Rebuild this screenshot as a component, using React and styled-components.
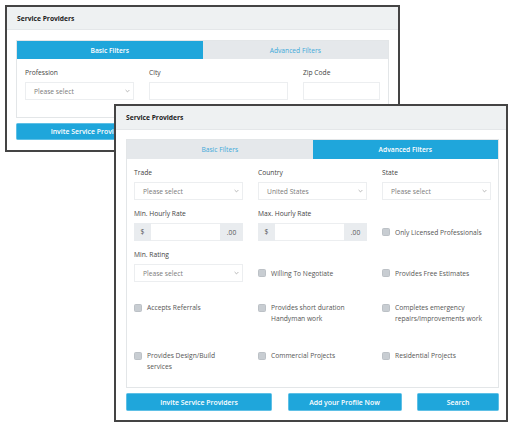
import React from "react";
import styled, { createGlobalStyle } from "styled-components";

const Global = createGlobalStyle`
  html, body { margin: 0; padding: 0; background: #fff; }
  body { font-family: "Open Sans", "Liberation Sans", sans-serif; font-size: 6.7px; color: #444; }
  * { box-sizing: border-box; }
`;

const Desk = styled.div`
  position: relative;
  width: 512px;
  height: 423px;
  overflow: hidden;
  background: #fff;
`;

const Win = styled.div`
  position: absolute;
  left: ${(p) => p.$x}px;
  top: ${(p) => p.$y}px;
  width: ${(p) => p.$w}px;
  height: ${(p) => p.$h}px;
  border: 2px solid #444;
  background: #fff;
  display: flex;
  flex-direction: column;
`;

const Header = styled.div`
  height: ${(p) => p.$h}px;
  flex: none;
  background: #eef1f2;
  border-bottom: 1px solid #e4e7e9;
  display: flex;
  align-items: center;
  padding-left: 10px;
  font-weight: 700;
  font-size: 6.7px;
  color: #222;
`;

const Body = styled.div`
  padding: ${(p) => p.$pad};
  display: flex;
  flex-direction: column;
`;

const Panel = styled.div`
  border: 1px solid #e3e6e8;
  display: flex;
  flex-direction: column;
`;

const Tabs = styled.div`
  display: flex;
  height: ${(p) => p.$h}px;
`;

const Tab = styled.div`
  flex: 1;
  display: flex;
  align-items: center;
  justify-content: center;
  background: ${(p) => (p.$active ? "#1fa6db" : "#e5e8eb")};
  color: ${(p) => (p.$active ? "#fff" : "#3ea9da")};
  font-weight: ${(p) => (p.$active ? 600 : 400)};
`;

const PanelBody = styled.div`
  padding: ${(p) => p.$pad};
  display: flex;
  flex-direction: column;
`;

const Row = styled.div`
  display: grid;
  grid-template-columns: ${(p) => p.$cols || "repeat(3, 1fr)"};
  column-gap: 15px;
  margin-top: ${(p) => p.$mt || 0}px;
`;

const Field = styled.div`
  display: flex;
  flex-direction: column;
`;

const Label = styled.div`
  line-height: 10px;
  height: 10px;
  margin-bottom: 4px;
  color: #444;
`;

const SelectBox = styled.div`
  height: 18px;
  border: 1px solid #eceef0;
  display: flex;
  align-items: center;
  justify-content: space-between;
  padding: 0 3px 0 8px;
  color: #7a7a7a;
  background: #fff;
`;

const TextBox = styled.div`
  height: 18px;
  border: 1px solid #eceef0;
  background: #fff;
`;

const Group = styled.div`
  height: 18px;
  display: flex;
`;

const Addon = styled.div`
  width: ${(p) => p.$w}px;
  background: #e9ecef;
  color: #555;
  display: flex;
  align-items: center;
  justify-content: center;
`;

const GroupInput = styled.div`
  flex: 1;
  border-top: 1px solid #eceef0;
  border-bottom: 1px solid #eceef0;
  background: #fff;
`;

const CheckCell = styled.div`
  display: flex;
  align-items: ${(p) => (p.$control ? "center" : "flex-start")};
  align-self: ${(p) => (p.$control ? "end" : "start")};
  height: ${(p) => (p.$control ? "18px" : "auto")};
  gap: 5px;
  line-height: 11px;
  color: #555;
`;

const Box = styled.span`
  flex: none;
  width: 8px;
  height: 8px;
  border-radius: 1.5px;
  background: #c8cdd2;
  border: 0.5px solid #bcc1c6;
  margin-top: ${(p) => (p.$control ? 0 : 1.5)}px;
`;

const Buttons = styled.div`
  display: flex;
  justify-content: ${(p) => p.$justify || "space-between"};
  margin-top: ${(p) => p.$mt}px;
`;

const Button = styled.div`
  width: ${(p) => p.$w}px;
  height: ${(p) => p.$h || 18}px;
  background: #1fa6db;
  border: 1px solid #5ec0e6;
  border-radius: 1.5px;
  color: #fff;
  font-weight: 600;
  font-size: 6.9px;
  display: flex;
  align-items: center;
  justify-content: center;
`;

const Chevron = () => (
  <svg width="5" height="4" viewBox="0 0 5 4">
    <polyline points="0.6,1 2.5,2.9 4.4,1" fill="none" stroke="#999" strokeWidth="0.7" />
  </svg>
);

const Select = ({ value = "Please select" }) => (
  <SelectBox>
    <span>{value}</span>
    <Chevron />
  </SelectBox>
);

const Check = ({ children, control }) => (
  <CheckCell $control={control}>
    <Box $control={control} />
    <span>{children}</span>
  </CheckCell>
);

export default function App() {
  return (
    <Desk>
      <Global />
      <Win $x={5} $y={5} $w={395} $h={147}>
        <Header $h={23}>Service Providers</Header>
        <Body $pad="10px 9px 0 9px">
          <Panel>
            <Tabs $h={18}>
              <Tab $active>Basic Filters</Tab>
              <Tab>Advanced Filters</Tab>
            </Tabs>
            <PanelBody $pad="9px 8px 17px 8px">
              <Row $cols="109px 139px 77px">
                <Field>
                  <Label>Profession</Label>
                  <Select />
                </Field>
                <Field>
                  <Label>City</Label>
                  <TextBox />
                </Field>
                <Field>
                  <Label>Zip Code</Label>
                  <TextBox />
                </Field>
              </Row>
            </PanelBody>
          </Panel>
          <Buttons $mt={5} $justify="flex-start">
            <Button $w={147} $h={17}>Invite Service Providers</Button>
          </Buttons>
        </Body>
      </Win>

      <Win $x={114} $y={104} $w={394} $h={318}>
        <Header $h={24}>Service Providers</Header>
        <Body $pad="9px 7px 0 10px">
          <Panel>
            <Tabs $h={19}>
              <Tab>Basic Filters</Tab>
              <Tab $active>Advanced Filters</Tab>
            </Tabs>
            <PanelBody $pad="9px 7px 15px 7px">
              <Row>
                <Field>
                  <Label>Trade</Label>
                  <Select />
                </Field>
                <Field>
                  <Label>Country</Label>
                  <Select value="United States" />
                </Field>
                <Field>
                  <Label>State</Label>
                  <Select />
                </Field>
              </Row>
              <Row $mt={9}>
                <Field>
                  <Label>Min. Hourly Rate</Label>
                  <Group>
                    <Addon $w={17}>$</Addon>
                    <GroupInput />
                    <Addon $w={23}>.00</Addon>
                  </Group>
                </Field>
                <Field>
                  <Label>Max. Hourly Rate</Label>
                  <Group>
                    <Addon $w={17}>$</Addon>
                    <GroupInput />
                    <Addon $w={23}>.00</Addon>
                  </Group>
                </Field>
                <Check control>Only Licensed Professionals</Check>
              </Row>
              <Row $mt={9}>
                <Field>
                  <Label>Min. Rating</Label>
                  <Select />
                </Field>
                <Check control>Willing To Negotiate</Check>
                <Check control>Provides Free Estimates</Check>
              </Row>
              <Row $mt={20}>
                <Check>Accepts Referrals</Check>
                <Check>Provides short duration<br />Handyman work</Check>
                <Check>Completes emergency<br />repairs/improvements work</Check>
              </Row>
              <Row $mt={26}>
                <Check>Provides Design/Build<br />services</Check>
                <Check>Commercial Projects</Check>
                <Check>Residential Projects</Check>
              </Row>
            </PanelBody>
          </Panel>
          <Buttons $mt={5}>
            <Button $w={146}>Invite Service Providers</Button>
            <Button $w={114}>Add your Profile Now</Button>
            <Button $w={82}>Search</Button>
          </Buttons>
        </Body>
      </Win>
    </Desk>
  );
}
